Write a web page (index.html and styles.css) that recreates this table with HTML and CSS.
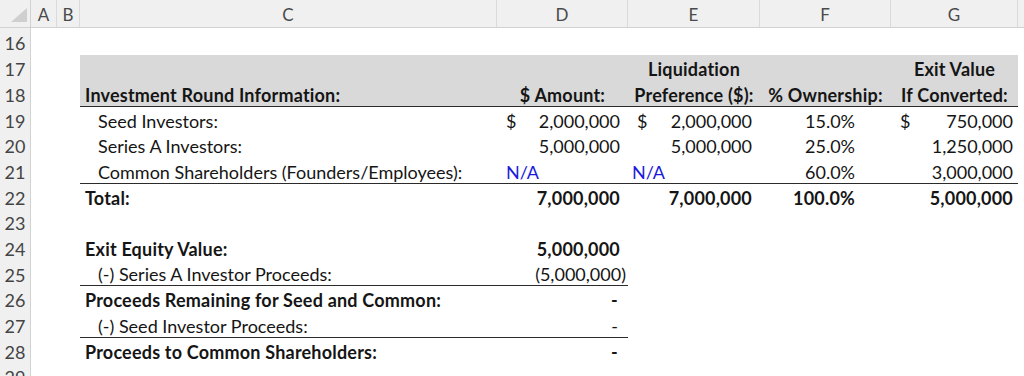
FILE: index.html
```html
<!DOCTYPE html>
<html lang="en">
<head>
<meta charset="utf-8">
<title>Liquidation Preference</title>
<link rel="stylesheet" href="styles.css">
</head>
<body>
<div class="sheet">
  <div class="colhead">
    <div class="ch corner"><svg class="tri" width="20" height="16" viewBox="0 0 20 16"><polygon points="19,1 19,15 3,15" fill="#cfcfcf"/></svg></div>
    <div class="ch">A</div>
    <div class="ch">B</div>
    <div class="ch">C</div>
    <div class="ch">D</div>
    <div class="ch">E</div>
    <div class="ch">F</div>
    <div class="ch">G</div>
    <div class="ch last"></div>
  </div>

  <div class="row first"><div class="rn">16</div></div>

  <div class="row">
    <div class="rn">17</div>
    <div class="c C band"></div>
    <div class="c D band"></div>
    <div class="c E band ctr b">Liquidation</div>
    <div class="c F band"></div>
    <div class="c G band ctr b">Exit Value</div>
  </div>

  <div class="row">
    <div class="rn">18</div>
    <div class="c C band line b lbl">Investment Round Information:</div>
    <div class="c D band line ctr b">$ Amount:</div>
    <div class="c E band line ctr b">Preference ($):</div>
    <div class="c F band line ctr b">% Ownership:</div>
    <div class="c G band line ctr b">If Converted:</div>
  </div>

  <div class="row">
    <div class="rn">19</div>
    <div class="c C ind">Seed Investors:</div>
    <div class="c D acc"><span>$</span><span>2,000,000</span></div>
    <div class="c E acc"><span>$</span><span>2,000,000</span></div>
    <div class="c F pct">15.0%</div>
    <div class="c G acc"><span>$</span><span>750,000</span></div>
  </div>

  <div class="row">
    <div class="rn">20</div>
    <div class="c C ind">Series A Investors:</div>
    <div class="c D acc"><span>5,000,000</span></div>
    <div class="c E acc"><span>5,000,000</span></div>
    <div class="c F pct">25.0%</div>
    <div class="c G acc"><span>1,250,000</span></div>
  </div>

  <div class="row">
    <div class="rn">21</div>
    <div class="c C ind line">Common Shareholders (Founders/Employees):</div>
    <div class="c D line na na-d">N/A</div>
    <div class="c E line na na-e">N/A</div>
    <div class="c F line pct">60.0%</div>
    <div class="c G line acc"><span>3,000,000</span></div>
  </div>

  <div class="row">
    <div class="rn">22</div>
    <div class="c C b lbl">Total:</div>
    <div class="c D acc b"><span>7,000,000</span></div>
    <div class="c E acc b"><span>7,000,000</span></div>
    <div class="c F pct b">100.0%</div>
    <div class="c G acc b"><span>5,000,000</span></div>
  </div>

  <div class="row"><div class="rn">23</div></div>

  <div class="row">
    <div class="rn">24</div>
    <div class="c C b lbl">Exit Equity Value:</div>
    <div class="c D acc b"><span>5,000,000</span></div>
  </div>

  <div class="row">
    <div class="rn">25</div>
    <div class="c C ind line">(-) Series A Investor Proceeds:</div>
    <div class="c D acc neg line"><span>(5,000,000)</span></div>
  </div>

  <div class="row">
    <div class="rn">26</div>
    <div class="c C b lbl">Proceeds Remaining for Seed and Common:</div>
    <div class="c D acc dash b"><span>-</span></div>
  </div>

  <div class="row">
    <div class="rn">27</div>
    <div class="c C ind line">(-) Seed Investor Proceeds:</div>
    <div class="c D acc dash line"><span>-</span></div>
  </div>

  <div class="row">
    <div class="rn">28</div>
    <div class="c C b lbl">Proceeds to Common Shareholders:</div>
    <div class="c D acc dash b"><span>-</span></div>
  </div>

  <div class="row"><div class="rn">29</div></div>
</div>
</body>
</html>
```

FILE: styles.css
```css
html, body {
  margin: 0;
  padding: 0;
  background: #ffffff;
}

body {
  font-family: "Lato", "Liberation Sans", sans-serif;
  font-size: 18px;
  color: #151515;
  overflow: hidden;
}

.sheet {
  width: 1024px;
  height: 376px;
  overflow: hidden;
}

.colhead,
.row {
  display: grid;
  grid-template-columns: 31px 26px 23px 417px 131px 132px 131px 127px 1fr;
}

.colhead {
  height: 28px;
  background: #f0f0f0;
  border-bottom: 1px solid #d2d2d2;
  box-sizing: border-box;
}

.ch {
  display: flex;
  align-items: center;
  justify-content: center;
  color: #4a4a4a;
  font-size: 17px;
  border-right: 1px solid #dadada;
  padding-top: 2px;
  box-sizing: border-box;
}

.ch.last {
  border-right: none;
}

.corner {
  position: relative;
  border-right: 1px solid #d2d2d2;
}

.tri {
  position: absolute;
  left: 8px;
  top: 7px;
}

.row {
  height: 25.67px;
}

.row.first {
  height: 27px;
}

.rn {
  grid-column: 1;
  background: #f0f0f0;
  border-right: 1px solid #d2d2d2;
  color: #444444;
  display: flex;
  align-items: center;
  justify-content: center;
  padding-top: 3px;
  box-sizing: border-box;
}

.c {
  display: flex;
  align-items: center;
  white-space: nowrap;
  padding-top: 3px;
  box-sizing: border-box;
}

.C { grid-column: 4; }
.D { grid-column: 5; }
.E { grid-column: 6; }
.F { grid-column: 7; }
.G { grid-column: 8; }

.band {
  background: #d9d9d9;
}

.line {
  border-bottom: 1px solid #2b2b2b;
}

.b {
  font-weight: 700;
  letter-spacing: 0.2px;
}

.lbl {
  padding-left: 5px;
}

.ind {
  padding-left: 18px;
}

.ctr {
  justify-content: center;
}

.acc {
  justify-content: space-between;
  padding-left: 9px;
  padding-right: 8px;
}

.acc span:only-child {
  margin-left: auto;
}

.G.acc {
  padding-right: 5px;
}

.neg {
  padding-right: 2px;
}

.dash {
  padding-right: 10px;
}

.pct {
  justify-content: flex-end;
  padding-right: 36px;
}

.na {
  color: #1a1adc;
}

.na-d {
  padding-left: 9px;
}

.na-e {
  padding-left: 4px;
}
```
